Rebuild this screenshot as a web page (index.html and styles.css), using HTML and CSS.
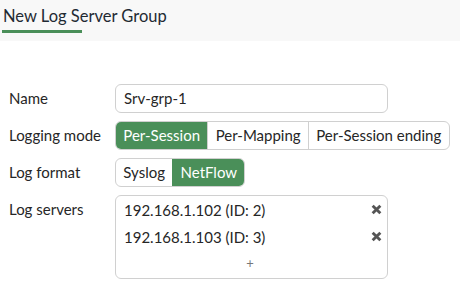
FILE: index.html
```html
<!DOCTYPE html>
<html>
<head>
<meta charset="utf-8">
<link rel="stylesheet" href="styles.css">
</head>
<body>
<div class="header">
  <div class="title">New Log Server Group</div>
</div>
<div class="form">
  <div class="row">
    <div class="label">Name</div>
    <div class="input">Srv-grp-1</div>
  </div>
  <div class="row">
    <div class="label">Logging mode</div>
    <div class="seg">
      <div class="opt active">Per-Session</div>
      <div class="opt">Per-Mapping</div>
      <div class="opt">Per-Session ending</div>
    </div>
  </div>
  <div class="row">
    <div class="label">Log format</div>
    <div class="seg">
      <div class="opt">Syslog</div>
      <div class="opt active">NetFlow</div>
    </div>
  </div>
  <div class="row top">
    <div class="label">Log servers</div>
    <div class="list">
      <div class="item"><span>192.168.1.102 (ID: 2)</span><svg class="x" viewBox="0 0 10 10"><path d="M1.5 1.5L8.5 8.5M8.5 1.5L1.5 8.5" stroke="#555" stroke-width="2.6" stroke-linecap="butt"/></svg></div>
      <div class="item"><span>192.168.1.103 (ID: 3)</span><svg class="x" viewBox="0 0 10 10"><path d="M1.5 1.5L8.5 8.5M8.5 1.5L1.5 8.5" stroke="#555" stroke-width="2.6" stroke-linecap="butt"/></svg></div>
      <div class="add">+</div>
    </div>
  </div>
</div>
</body>
</html>
```
FILE: styles.css
```css
* { box-sizing: border-box; }
body {
  margin: 0;
  background: #fff;
  font-family: Lato, "Open Sans", sans-serif;
  color: #262626;
  font-size: 15px;
}
.header {
  height: 41px;
  background: #f8f8f8;
  padding: 5px 0 0 3px;
}
.title {
  font-size: 16.5px;
  color: #1f2a33;
  position: relative;
  line-height: 22px;
  display: inline-block;
}
.title::after {
  content: "";
  position: absolute;
  left: -1px;
  top: 25px;
  width: 80px;
  height: 3px;
  background: #4a8f59;
}
.form {
  padding: 43px 0 0 9px;
  display: flex;
  flex-direction: column;
  gap: 8px;
}
.row {
  display: flex;
  align-items: center;
}
.row.top { align-items: flex-start; }
.label {
  width: 106px;
  line-height: 29px;
}
.row.top .label { line-height: 28px; }
.input {
  width: 273px;
  height: 29px;
  border: 1px solid #d0d0d0;
  border-radius: 6px;
  padding-left: 8px;
  line-height: 27px;
}
.seg {
  display: flex;
  border: 1px solid #d0d0d0;
  border-radius: 6px;
  height: 29px;
  overflow: hidden;
}
.opt {
  padding: 0 7.3px;
  line-height: 27px;
  border-left: 1px solid #d0d0d0;
}
.opt:first-child { border-left: none; }
.opt.active {
  background: #4a8f59;
  color: #fff;
  border-left-color: #4a8f59;
}
.list {
  width: 273px;
  height: 84px;
  border: 1px solid #d0d0d0;
  border-radius: 6px;
  padding: 0 5px 0 8px;
}
.item {
  display: flex;
  justify-content: space-between;
  align-items: center;
  height: 27px;
}
.x { width: 11px; height: 11px; }
.add {
  text-align: center;
  color: #777;
  font-size: 13px;
  line-height: 26px;
  padding-right: 6px;
}
```
